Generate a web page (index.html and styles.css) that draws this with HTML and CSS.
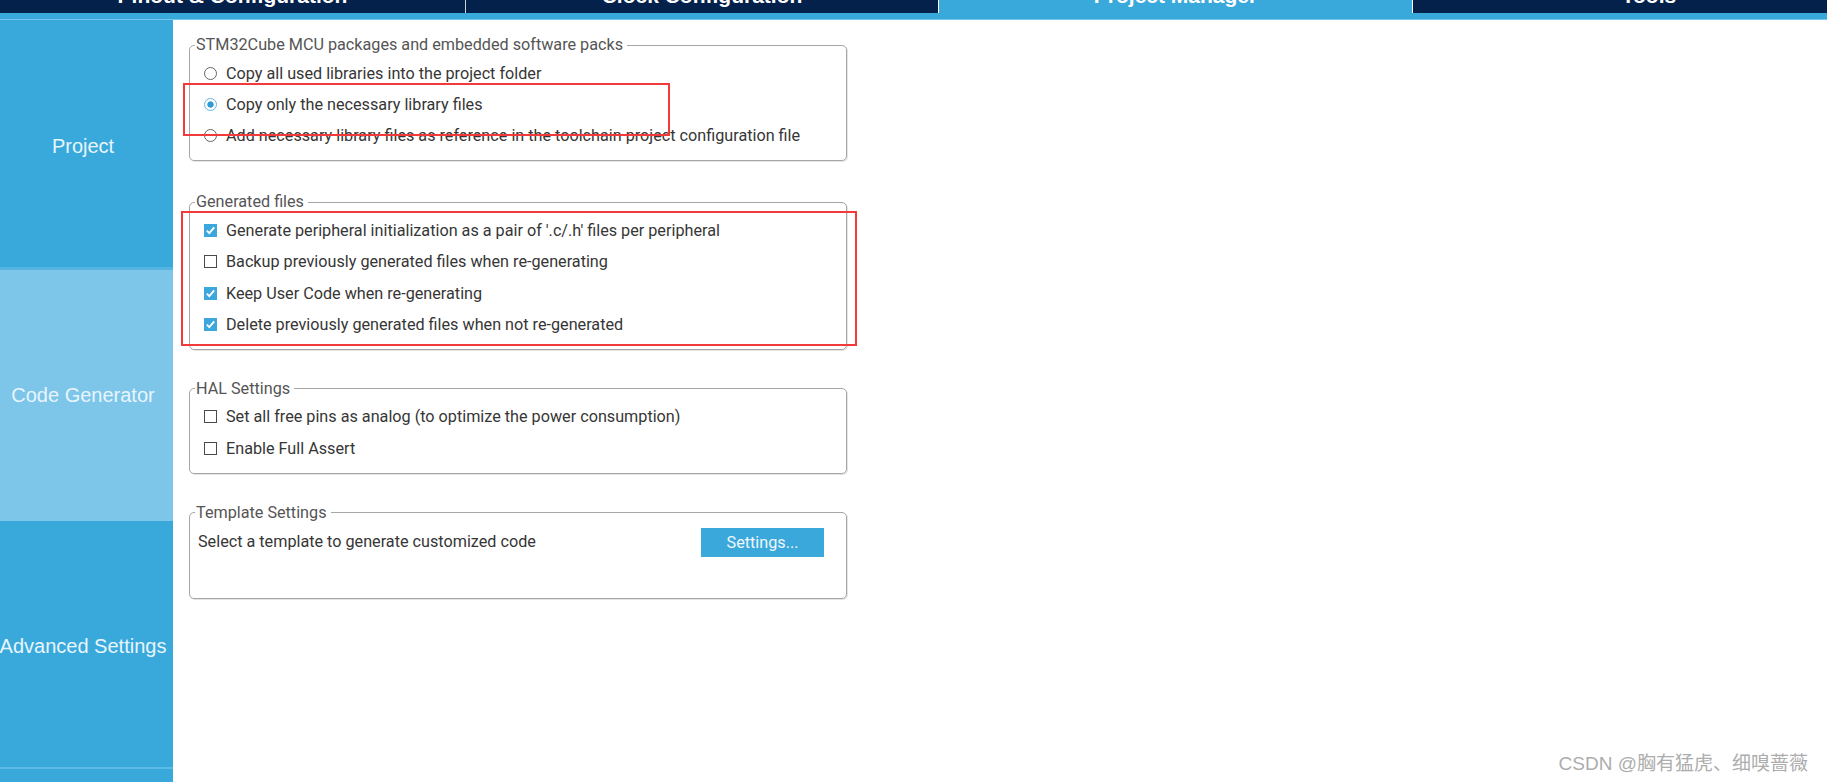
FILE: index.html
```html
<!DOCTYPE html>
<html lang="en">
<head>
<meta charset="utf-8">
<title>Project Manager - Code Generator</title>
<link rel="stylesheet" href="styles.css">
</head>
<body>
<div class="app">
  <header class="tabs">
    <div class="tab tab-first"><span>Pinout &amp; Configuration</span></div>
    <div class="tab tab-2"><span>Clock Configuration</span></div>
    <div class="tab tab-3 active"><span>Project Manager</span></div>
    <div class="tab tab-4"><span>Tools</span></div>
  </header>
  <div class="strip"></div>
  <div class="main">
    <nav class="sidebar">
      <div class="nav-item nav-project">Project</div>
      <div class="nav-item nav-codegen">Code Generator</div>
      <div class="nav-item nav-advanced">Advanced Settings</div>
      <div class="nav-rest"></div>
    </nav>
    <section class="content">
      <fieldset class="group group-first">
        <legend>STM32Cube MCU packages and embedded software packs</legend>
        <div class="opt"><span class="radio"></span><span class="label">Copy all used libraries into the project folder</span></div>
        <div class="opt"><span class="radio on"></span><span class="label">Copy only the necessary library files</span></div>
        <div class="opt"><span class="radio"></span><span class="label">Add necessary library files as reference in the toolchain project configuration file</span></div>
      </fieldset>

      <fieldset class="group">
        <legend>Generated files</legend>
        <div class="opt"><span class="check on"><svg viewBox="0 0 13 13" width="13" height="13"><polyline points="2.8,6.6 5.3,9.2 10.2,3.4" fill="none" stroke="#fff" stroke-width="1.9"/></svg></span><span class="label">Generate peripheral initialization as a pair of '.c/.h' files per peripheral</span></div>
        <div class="opt"><span class="check"></span><span class="label">Backup previously generated files when re-generating</span></div>
        <div class="opt"><span class="check on"><svg viewBox="0 0 13 13" width="13" height="13"><polyline points="2.8,6.6 5.3,9.2 10.2,3.4" fill="none" stroke="#fff" stroke-width="1.9"/></svg></span><span class="label">Keep User Code when re-generating</span></div>
        <div class="opt"><span class="check on"><svg viewBox="0 0 13 13" width="13" height="13"><polyline points="2.8,6.6 5.3,9.2 10.2,3.4" fill="none" stroke="#fff" stroke-width="1.9"/></svg></span><span class="label">Delete previously generated files when not re-generated</span></div>
      </fieldset>

      <fieldset class="group">
        <legend>HAL Settings</legend>
        <div class="opt"><span class="check"></span><span class="label">Set all free pins as analog (to optimize the power consumption)</span></div>
        <div class="opt"><span class="check"></span><span class="label">Enable Full Assert</span></div>
      </fieldset>

      <fieldset class="group group-template">
        <legend>Template Settings</legend>
        <div class="tpl-row"><span class="label">Select a template to generate customized code</span><button class="btn" type="button">Settings...</button></div>
      </fieldset>

      <div class="mark mark-1"></div>
      <div class="mark mark-2"></div>
    </section>
  </div>
  <div class="watermark">CSDN @胸有猛虎、细嗅蔷薇</div>
</div>
</body>
</html>
```

FILE: styles.css
```css
html, body {
  margin: 0;
  padding: 0;
  background: #ffffff;
}

.app {
  position: relative;
  width: 1827px;
  height: 782px;
  overflow: hidden;
  display: flex;
  flex-direction: column;
}

/* top tab bar (cut at the top) */
.tabs {
  display: flex;
  height: 13px;
  background: #03214a;
  overflow: hidden;
  flex: 0 0 auto;
}

.tab {
  flex: 0 0 auto;
  width: 472px;
  border-left: 1px solid #c9d0da;
  color: #ffffff;
  font-family: "Liberation Sans", Arial, sans-serif;
  font-weight: bold;
  font-size: 21px;
  text-align: center;
  white-space: nowrap;
}

.tab span {
  display: block;
  line-height: 20px;
  margin-top: -14px;
}

.tab-first {
  width: 465px;
  border-left: 0;
}

.tab-3 {
  width: 473px;
}

.tab.active {
  background: #39a9db;
  border-left-color: #ffffff;
}

.tab-4 {
  border-left-color: #ffffff;
}

.strip {
  height: 6px;
  background: #39a9db;
  border-bottom: 1px solid #76c6ec;
  flex: 0 0 auto;
}

.main {
  flex: 1 1 auto;
  display: flex;
  min-height: 0;
}

/* left navigation */
.sidebar {
  width: 173px;
  flex: 0 0 auto;
  display: flex;
  flex-direction: column;
  background: #39a9db;
}

.nav-item {
  display: flex;
  align-items: center;
  justify-content: center;
  padding-right: 7px;
  color: #e8f5fc;
  font-family: "Liberation Sans", Arial, sans-serif;
  font-size: 20px;
  white-space: nowrap;
}

.nav-project {
  height: 241px;
  padding-top: 6px;
}

.nav-codegen {
  height: 251px;
  background: #7dc6e9;
  border-top: 3px solid #55b5e1;
}

.nav-advanced {
  height: 242px;
  padding-top: 4px;
  border-bottom: 2px solid #5dbae4;
}

.nav-rest {
  flex: 1 1 auto;
}

/* content */
.content {
  position: relative;
  flex: 1 1 auto;
  padding: 15px 0 0 16px;
  font-family: Roboto, "Liberation Sans", Arial, sans-serif;
  font-size: 16.2px;
  color: #363636;
}

.group {
  width: 656px;
  margin: 0 0 29px 0;
  padding: 2.5px 0 8.5px 0;
  border: 1px solid #a6a6a6;
  border-radius: 5px;
  box-shadow: 1px 1px 0 #e4e4e4;
  min-width: 0;
}

.group-first {
  margin-bottom: 31px;
}

.group legend {
  margin-left: 5px;
  padding: 0 4px 0 1px;
  line-height: 20px;
  font-size: 16.2px;
  color: #555555;
}

.group-template {
  padding-bottom: 41px;
}

.opt {
  display: flex;
  align-items: center;
  height: 31.4px;
  padding-left: 14px;
  gap: 9px;
  white-space: nowrap;
}

.check {
  width: 13px;
  height: 13px;
  box-sizing: border-box;
  border: 1px solid #4a4a4a;
  background: #ffffff;
  flex: 0 0 auto;
  display: block;
}

.check.on {
  border-color: #3ba7dd;
  background: #3ba7dd;
}

.check svg {
  display: block;
  margin: -1px;
}

.radio {
  width: 13px;
  height: 13px;
  box-sizing: border-box;
  border-radius: 50%;
  border: 1px solid #666666;
  background: #ffffff;
  flex: 0 0 auto;
}

.radio.on {
  border-color: #62b6e4;
  background: radial-gradient(circle, #2f9ad5 0, #2f9ad5 2.8px, #ffffff 3.5px);
}

.tpl-row {
  display: flex;
  align-items: center;
  justify-content: space-between;
  height: 31.4px;
  padding: 1px 22px 0 8px;
  white-space: nowrap;
}

.btn {
  width: 123px;
  height: 29px;
  border: 0;
  margin: 2px 0 0 0;
  padding: 0;
  background: #3aa8db;
  color: #eef8fd;
  font-family: Roboto, "Liberation Sans", Arial, sans-serif;
  font-size: 16.2px;
}

/* red annotation boxes drawn over the screenshot */
.mark {
  position: absolute;
  border: 2px solid #f23a3a;
  box-sizing: border-box;
}

.mark-1 {
  left: 10px;
  top: 63px;
  width: 487px;
  height: 53px;
}

.mark-2 {
  left: 8px;
  top: 191px;
  width: 676px;
  height: 135px;
}

.watermark {
  position: absolute;
  right: 19px;
  top: 752px;
  font-family: "Liberation Sans", "Noto Sans CJK SC", sans-serif;
  font-size: 19px;
  line-height: 24px;
  color: #adadad;
  white-space: nowrap;
}
```
